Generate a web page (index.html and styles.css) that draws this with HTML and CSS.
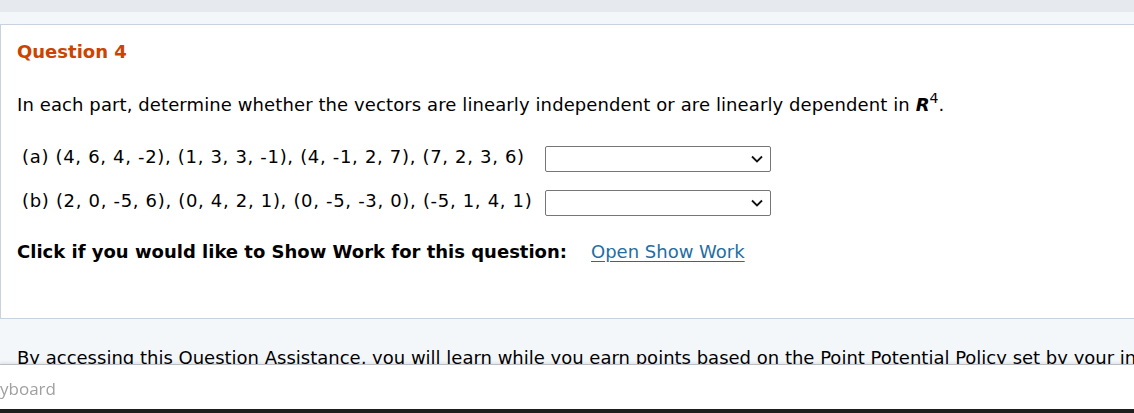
FILE: index.html
```html
<!DOCTYPE html>
<html>
<head>
<meta charset="utf-8">
<link rel="stylesheet" href="styles.css">
</head>
<body>
<div class="topbar"></div>
<div class="page">
  <div class="card">
    <h2 class="qtitle">Question 4</h2>
    <p class="prompt">In each part, determine whether the vectors are linearly independent or are linearly dependent in <b class="rr">R</b><sup class="sup">4</sup>.</p>
    <table class="parts">
      <tr>
        <td class="vec">(a) (4, 6, 4, -2), (1, 3, 3, -1), (4, -1, 2, 7), (7, 2, 3, 6)</td>
        <td class="selcell"><div class="select"><svg class="chev" width="12" height="8" viewBox="0 0 12 8"><path d="M1 1.5 L6 6.5 L11 1.5" fill="none" stroke="#111" stroke-width="1.8"/></svg></div></td>
      </tr>
      <tr>
        <td class="vec">(b) (2, 0, -5, 6), (0, 4, 2, 1), (0, -5, -3, 0), (-5, 1, 4, 1)</td>
        <td class="selcell"><div class="select"><svg class="chev" width="12" height="8" viewBox="0 0 12 8"><path d="M1 1.5 L6 6.5 L11 1.5" fill="none" stroke="#111" stroke-width="1.8"/></svg></div></td>
      </tr>
    </table>
    <div class="showwork">
      <span class="sw-label">Click if you would like to Show Work for this question:</span>
      <a class="sw-link" href="#">Open Show Work</a>
    </div>
  </div>
  <p class="assist">By accessing this Question Assistance, you will learn while you earn points based on the Point Potential Policy set by your instructor.</p>
</div>
<div class="kbd">
  <div class="kbd-panel"><span class="kbd-text">yboard</span></div>
  <div class="kbd-bar"></div>
</div>
</body>
</html>
```
FILE: styles.css
```css
html, body {
  margin: 0;
  padding: 0;
}
body {
  background: #f4f7fa;
  font-family: "DejaVu Sans", Verdana, sans-serif;
  font-size: 18px;
  color: #000;
  overflow: hidden;
  width: 1134px;
  height: 413px;
}
.topbar {
  height: 12px;
  background: #e6eaee;
}
.page {
  padding-top: 12px;
  width: 1134px;
  overflow: hidden;
}
.card {
  background: #fff;
  border: 1px solid #c9d3df;
  border-right: none;
  height: 293px;
  padding: 0 16px;
  box-sizing: content-box;
}
.qtitle {
  margin: 16px 0 0;
  padding: 0;
  font-size: 18px;
  line-height: 22px;
  font-weight: bold;
  color: #cc4400;
}
.prompt {
  margin: 31px 0 0;
  line-height: 22px;
  white-space: nowrap;
  letter-spacing: 0.1px;
}
.rr {
  font-style: italic;
  font-weight: bold;
}
.sup {
  font-size: 14px;
  vertical-align: 8px;
  line-height: 0;
}
.parts {
  border-collapse: separate;
  border-spacing: 0;
  margin-top: 18px;
  margin-left: 2px;
}
.parts td {
  padding: 0 3px;
  height: 44px;
  vertical-align: middle;
}
.vec {
  white-space: nowrap;
  letter-spacing: 0.68px;
  padding-right: 10px !important;
}
.select {
  width: 218px;
  height: 24px;
  border: 1px solid #767676;
  border-radius: 2px;
  background: #fff;
  display: flex;
  align-items: center;
  justify-content: flex-end;
  padding-right: 6px;
  box-sizing: content-box;
  position: relative;
  top: 3px;
}
.chev {
  margin-right: 1px;
}
.showwork {
  margin-top: 19px;
  line-height: 22px;
  display: flex;
  gap: 24px;
  white-space: nowrap;
}
.sw-label {
  font-weight: bold;
}
.sw-link {
  color: #1f6ea3;
  text-decoration: underline;
  text-underline-offset: 3px;
}
.assist {
  margin: 28px 0 0;
  padding-left: 17px;
  line-height: 22px;
  white-space: nowrap;
}
.kbd {
  position: fixed;
  left: 0;
  right: 0;
  top: 364px;
  bottom: 0;
  display: flex;
  flex-direction: column;
}
.kbd-panel {
  flex: 1;
  background: #fff;
  border-top: 1px solid #b9bec4;
  box-shadow: 0 -2px 2px rgba(0,0,0,0.06);
  display: flex;
  align-items: center;
}
.kbd-text {
  font-family: "Open Sans", "Noto Sans", sans-serif;
  font-size: 17px;
  color: #a0a0a0;
  margin-top: 2px;
}
.kbd-bar {
  height: 4px;
  background: #1e1e1e;
}
```
